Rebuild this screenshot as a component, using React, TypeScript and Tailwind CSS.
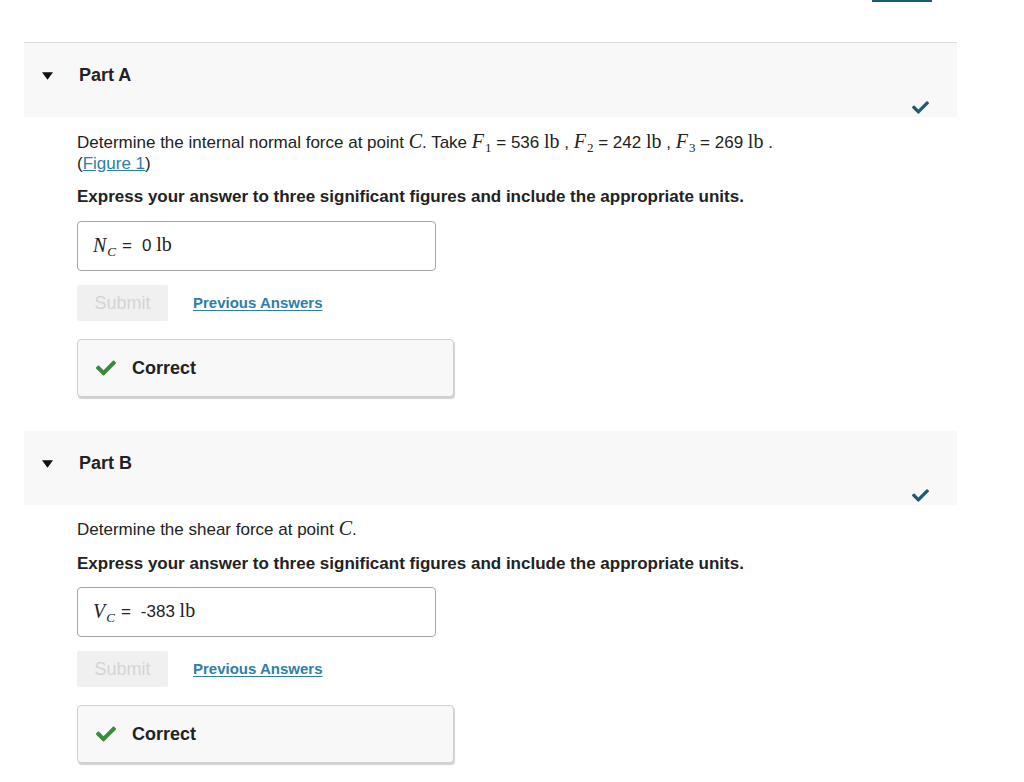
import React from "react";

const sans = "font-['Helvetica_Neue','Liberation_Sans',Arial,sans-serif]";
const serif = "font-['Liberation_Serif','Times_New_Roman',serif]";

function Check({ className }: { className?: string }) {
  return (
    <svg viewBox="0 0 512 512" className={className} fill="currentColor">
      <path d="M173.9 439.4L7.5 273c-10-10-10-26.2 0-36.2l36.2-36.2c10-10 26.2-10 36.2 0L192 312.7 432.1 72.6c10-10 26.2-10 36.2 0l36.2 36.2c10 10 10 26.2 0 36.2L210.1 439.4c-10 10-26.2 10-36.2 0z" />
    </svg>
  );
}

function Caret() {
  return (
    <svg viewBox="0 0 10 7" className="w-[11px] h-[8px]" fill="#111">
      <path d="M0 0h10L5 7z" />
    </svg>
  );
}

// math variable, kept at line-height 0 so it doesn't stretch the line box
function Var({ name, sub, subItalic }: { name: string; sub?: string; subItalic?: boolean }) {
  return (
    <span className={`${serif} italic text-[20px] leading-[0]`}>
      {name}
      {sub && (
        <span
          className={`text-[13px] relative top-[4px] ml-[1px] leading-[0] ${subItalic ? "italic" : "not-italic"}`}
        >
          {sub}
        </span>
      )}
    </span>
  );
}

function Unit({ children }: { children: React.ReactNode }) {
  return <span className={`${serif} text-[20px] leading-[0]`}>{children}</span>;
}

function PartHeader({ label }: { label: string }) {
  return (
    <div className="relative bg-[#f8f8f8] h-[74px] flex items-start pt-[22px]">
      <div className="w-[55px] pl-[18px] pt-[7px] flex items-center">
        <Caret />
      </div>
      <span className="text-[18px] leading-[20px] font-bold text-[#222]">{label}</span>
      <Check className="absolute right-[28px] bottom-[1px] w-[17px] h-[17px] text-[#1e5a74]" />
    </div>
  );
}

function AnswerBlock({ lhs, value }: { lhs: React.ReactNode; value: React.ReactNode }) {
  return (
    <div className="pl-[53px]">
      <div className="w-[359px] h-[50px] border border-[#a6a6a6] rounded-[4px] flex items-center pl-[15px] text-[17px] text-[#222]">
        {lhs}
        <span className="ml-[6px] mr-[10px]">=</span>
        {value}
      </div>
      <div className="flex items-center mt-[14px] h-[36px]">
        <div className="w-[91px] h-[36px] bg-[#f0f0f0] rounded-[2px] flex items-center justify-center text-[18px] text-[#d4d4d4]">
          Submit
        </div>
        <span className="ml-[25px] text-[15px] font-bold text-[#2c7fa8] underline underline-offset-2">
          Previous Answers
        </span>
      </div>
      <div className="mt-[18px] w-[377px] h-[58px] bg-[#f8f8f8] border border-[#cfcfcf] rounded-[4px] shadow-[1px_2px_1px_rgba(0,0,0,0.18)] flex items-center pl-[18px]">
        <Check className="w-[20px] h-[20px] text-[#3b8a3f]" />
        <span className="ml-[16px] text-[18px] font-bold text-[#222]">Correct</span>
      </div>
    </div>
  );
}

export default function App() {
  return (
    <div className={`${sans} relative w-[1024px] h-[782px] bg-white text-[#222] overflow-hidden`}>
      <div className="absolute left-[872px] top-0 w-[60px] h-[2px] bg-[#1e5a74]" />
      <div className="pt-[42px] pl-[24px] w-[957px]">
        <div className="border-t border-[#dcdcdc]">
          <PartHeader label="Part A" />
          <div className="pt-[15px] text-[17px]">
            <p className="pl-[53px] leading-[21px]">
              Determine the internal normal force at point <Var name="C" />. Take <Var name="F" sub="1" /> = 536{" "}
              <Unit>lb</Unit> , <Var name="F" sub="2" /> = 242 <Unit>lb</Unit> , <Var name="F" sub="3" /> = 269{" "}
              <Unit>lb</Unit> .
              <br />
              (<span className="text-[#2c7fa8] underline">Figure 1</span>)
            </p>
            <p className="pl-[53px] mt-[12px] font-bold leading-[21px]">
              Express your answer to three significant figures and include the appropriate units.
            </p>
            <div className="mt-[14px]">
              <AnswerBlock lhs={<Var name="N" sub="C" subItalic />} value={<span>0 <Unit>lb</Unit></span>} />
            </div>
          </div>
        </div>
        <div className="mt-[34px]">
          <PartHeader label="Part B" />
          <div className="pt-[14px] text-[17px]">
            <p className="pl-[53px] leading-[21px]">
              Determine the shear force at point <Var name="C" />.
            </p>
            <p className="pl-[53px] mt-[13px] font-bold leading-[21px]">
              Express your answer to three significant figures and include the appropriate units.
            </p>
            <div className="mt-[13px]">
              <AnswerBlock lhs={<Var name="V" sub="C" subItalic />} value={<span>-383 <Unit>lb</Unit></span>} />
            </div>
          </div>
        </div>
      </div>
    </div>
  );
}
